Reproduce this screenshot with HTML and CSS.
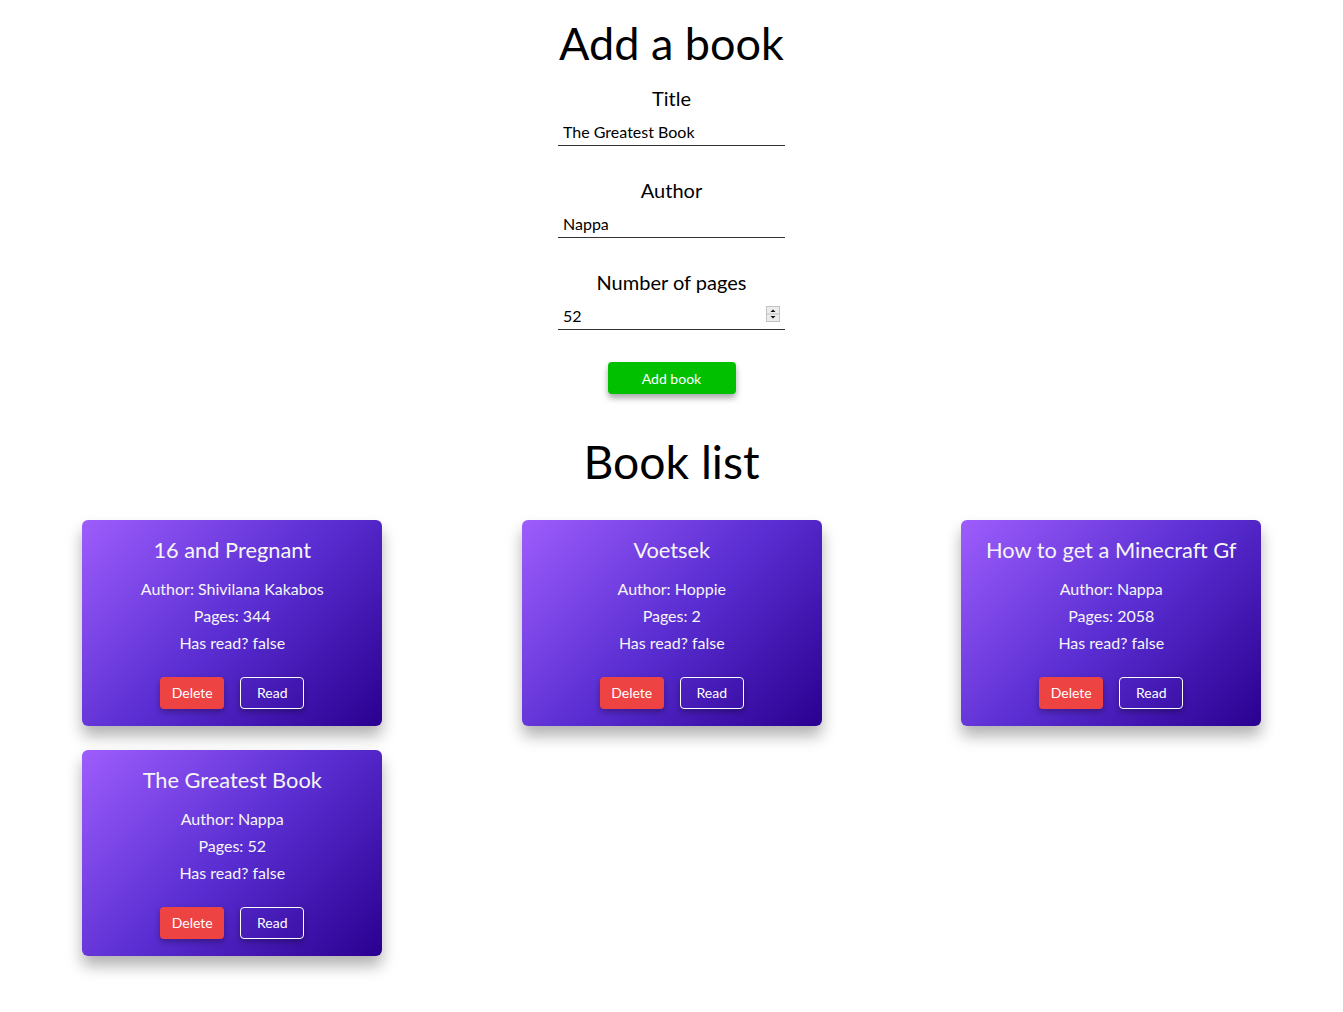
FILE: index.html
```html
<!DOCTYPE html>
<html lang="en">
<head>
<meta charset="utf-8">
<title>Library</title>
<link rel="stylesheet" href="styles.css">
</head>
<body>
<section class="add">
  <h1 class="heading">Add a book</h1>
  <form class="form">
    <div class="field">
      <label class="label" for="title">Title</label>
      <input class="input" id="title" type="text" value="The Greatest Book">
    </div>
    <div class="field">
      <label class="label" for="author">Author</label>
      <input class="input" id="author" type="text" value="Nappa">
    </div>
    <div class="field">
      <label class="label" for="pages">Number of pages</label>
      <input class="input" id="pages" type="number" value="52">
    </div>
    <button class="add-btn" type="button">Add book</button>
  </form>
</section>
<section class="list">
  <h1 class="heading list-heading">Book list</h1>
  <div class="grid">
    <div class="card">
      <h2 class="card-title">16 and Pregnant</h2>
      <p class="card-line">Author: Shivilana Kakabos</p>
      <p class="card-line">Pages: 344</p>
      <p class="card-line">Has read? false</p>
      <div class="actions"><button class="btn delete">Delete</button><button class="btn read">Read</button></div>
    </div>
    <div class="card">
      <h2 class="card-title">Voetsek</h2>
      <p class="card-line">Author: Hoppie</p>
      <p class="card-line">Pages: 2</p>
      <p class="card-line">Has read? false</p>
      <div class="actions"><button class="btn delete">Delete</button><button class="btn read">Read</button></div>
    </div>
    <div class="card">
      <h2 class="card-title">How to get a Minecraft Gf</h2>
      <p class="card-line">Author: Nappa</p>
      <p class="card-line">Pages: 2058</p>
      <p class="card-line">Has read? false</p>
      <div class="actions"><button class="btn delete">Delete</button><button class="btn read">Read</button></div>
    </div>
    <div class="card">
      <h2 class="card-title">The Greatest Book</h2>
      <p class="card-line">Author: Nappa</p>
      <p class="card-line">Pages: 52</p>
      <p class="card-line">Has read? false</p>
      <div class="actions"><button class="btn delete">Delete</button><button class="btn read">Read</button></div>
    </div>
  </div>
</section>
</body>
</html>
```

FILE: styles.css
```css
* { box-sizing: border-box; }
html, body { margin: 0; padding: 0; background: #fff; }
body {
  font-family: Lato, "Open Sans", sans-serif;
  color: #000;
  padding-bottom: 50px;
}
.add { display: flex; flex-direction: column; align-items: center; padding-top: 16px; }
.heading {
  margin: 0;
  font-size: 45px;
  line-height: 55px;
  font-weight: 400;
  text-align: center;
}
.form {
  display: flex;
  flex-direction: column;
  align-items: center;
  margin-top: 15px;
}
.field {
  display: flex;
  flex-direction: column;
  align-items: center;
  margin-bottom: 32px;
}
.label {
  font-size: 20px;
  line-height: 24px;
  margin-bottom: 11px;
}
.input {
  width: 227px;
  height: 25px;
  border: none;
  border-bottom: 1px solid #333;
  padding: 1px 5px 4px;
  font-family: Lato, sans-serif;
  font-size: 16px;
  line-height: 19px;
  color: #000;
  background: transparent;
  outline: none;
}
.input::-webkit-inner-spin-button {
  -webkit-appearance: none;
  appearance: none;
  opacity: 1;
  width: 14px;
  height: 16px;
  margin: 0 0 0 4px;
  background: url("data:image/svg+xml;utf8,<svg xmlns='http://www.w3.org/2000/svg' width='14' height='16' viewBox='0 0 14 16'><rect x='0.5' y='0.5' width='13' height='15' fill='%23ececec' stroke='%23c3c3c3'/><line x1='1' y1='8' x2='13' y2='8' stroke='%23c3c3c3'/><path d='M4.5 6 L7 3.5 L9.5 6 Z' fill='%23111'/><path d='M4.5 10 L7 12.5 L9.5 10 Z' fill='%23111'/></svg>") no-repeat center;
}
.add-btn {
  width: 128px;
  height: 32px;
  border: none;
  border-radius: 4px;
  background: #00c000;
  color: #fff;
  font-family: Lato, sans-serif;
  font-size: 14px;
  box-shadow: 0 4px 6px rgba(0,0,0,0.35);
}
.list-heading { margin-top: 40px; font-size: 46.3px; }
.grid {
  display: grid;
  grid-template-columns: repeat(3, 1fr);
  justify-items: center;
  row-gap: 24px;
  padding: 0 12px 0 12.5px;
  margin-top: 31px;
}
.card {
  width: 300px;
  height: 206px;
  border-radius: 6px;
  background: linear-gradient(135deg, #9e5dfc 0%, #5a2ed2 50%, #2a0090 100%);
  box-shadow: 0 10px 15px rgba(0,0,0,0.3);
  color: #f5f5f5;
  text-align: center;
  padding: 15px 10px 16px;
  display: flex;
  flex-direction: column;
  align-items: center;
}
.card-title {
  margin: 0 0 10px;
  font-size: 21.8px;
  line-height: 30px;
  font-weight: 400;
  white-space: nowrap;
}
.card-line {
  margin: 0;
  font-size: 16px;
  line-height: 27px;
}
.actions {
  display: flex;
  gap: 16px;
  margin-top: 21px;
}
.btn {
  width: 64px;
  height: 32px;
  border-radius: 4px;
  font-family: Lato, sans-serif;
  font-size: 14px;
  line-height: 30px;
  padding: 0;
  color: #fff;
  box-shadow: 0 3px 6px rgba(0,0,0,0.3);
}
.delete { background: #ee4343; border: none; }
.read { background: transparent; border: 1px solid #fff; }
```
